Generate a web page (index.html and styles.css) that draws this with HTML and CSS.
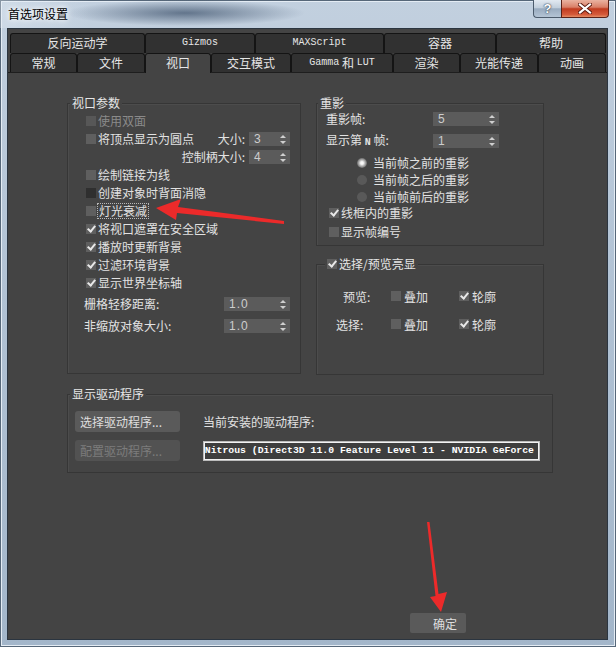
FILE: index.html
```html
<!DOCTYPE html>
<html lang="zh-CN">
<head>
  <meta charset="UTF-8">
  <title>首选项设置</title>
  <link rel="stylesheet" href="styles.css">
</head>
<body>

  <div class="window">
    <!-- Title bar -->
    <div class="titlebar">
      <span class="title">首选项设置</span>
      <div class="caption">
        <div class="cap-btn cap-help">?</div>
        <div class="cap-btn cap-close">
          <svg width="14" height="11" viewBox="0 0 14 11">
            <path d="M2 1.5 L12 9.5 M12 1.5 L2 9.5" stroke="#5a1a10" stroke-width="4" stroke-linecap="square"/>
            <path d="M2 1.5 L12 9.5 M12 1.5 L2 9.5" stroke="#ffffff" stroke-width="2.2" stroke-linecap="square"/>
          </svg>
        </div>
      </div>
    </div>

    <div class="client">
      <!-- Tabs, two rows -->
      <div class="tabs">
        <div class="tab-row row-top">
          <div class="tab tab-ik">反向运动学</div>
          <div class="tab tab-gizmos mono">Gizmos</div>
          <div class="tab tab-maxscript mono">MAXScript</div>
          <div class="tab tab-container">容器</div>
          <div class="tab tab-help">帮助</div>
        </div>
        <div class="tab-row row-bottom">
          <div class="tab tab-general">常规</div>
          <div class="tab tab-files">文件</div>
          <div class="tab tab-viewports selected">视口</div>
          <div class="tab tab-interaction">交互模式</div>
          <div class="tab tab-gamma"><span class="mono">Gamma</span>&nbsp;和&nbsp;<span class="mono">LUT</span></div>
          <div class="tab tab-render">渲染</div>
          <div class="tab tab-radiosity">光能传递</div>
          <div class="tab tab-anim">动画</div>
        </div>
      </div>

      <!-- Viewports page -->
      <div class="panel">
        <div class="columns">

          <div class="group g-view">
            <div class="group-title">视口参数</div>
            <div class="row first dim"><span class="cb"></span><span>使用双面</span></div>
            <div class="row"><span class="cb"></span><span>将顶点显示为圆点</span><span class="field-label push">大小:</span><span class="spin w-small">3</span></div>
            <div class="row end"><span class="field-label">控制柄大小:</span><span class="spin w-small">4</span></div>
            <div class="row"><span class="cb"></span><span>绘制链接为线</span></div>
            <div class="row"><span class="cb dark"></span><span>创建对象时背面消隐</span></div>
            <div class="row"><span class="cb"></span><span class="focus">灯光衰减</span></div>
            <div class="row"><span class="cb on"></span><span>将视口遮罩在安全区域</span></div>
            <div class="row"><span class="cb on"></span><span>播放时更新背景</span></div>
            <div class="row"><span class="cb on"></span><span>过滤环境背景</span></div>
            <div class="row"><span class="cb on"></span><span>显示世界坐标轴</span></div>
            <div class="row num grid-row"><span>栅格轻移距离:</span><span class="spin w-wide push">1.0</span></div>
            <div class="row num scale-row"><span>非缩放对象大小:</span><span class="spin w-wide push">1.0</span></div>
          </div>

          <div class="col-right">
            <div class="group g-ghost">
              <div class="group-title">重影</div>
              <div class="row ghost-row"><span class="lbl">重影帧:</span><span class="spin w-wide">5</span></div>
              <div class="row ghost-row second"><span class="lbl">显示第 <b class="mono">N</b> 帧:</span><span class="spin w-wide">1</span></div>
              <div class="radio-row first"><span class="rb on"></span><span>当前帧之前的重影</span></div>
              <div class="radio-row"><span class="rb"></span><span>当前帧之后的重影</span></div>
              <div class="radio-row"><span class="rb"></span><span>当前帧前后的重影</span></div>
              <div class="row cb-row wire"><span class="cb on"></span><span>线框内的重影</span></div>
              <div class="row cb-row frames"><span class="cb"></span><span>显示帧编号</span></div>
            </div>

            <div class="group g-highlight">
              <div class="group-title check-title"><span class="cb on"></span><span>选择/预览亮显</span></div>
              <div class="hl-row hl-preview">
                <span class="hl-label">预览:</span>
                <span class="hl-opt"><span class="cb"></span><span>叠加</span></span>
                <span class="hl-opt"><span class="cb on"></span><span>轮廓</span></span>
              </div>
              <div class="hl-row hl-select">
                <span class="hl-label">选择:</span>
                <span class="hl-opt"><span class="cb"></span><span>叠加</span></span>
                <span class="hl-opt"><span class="cb on"></span><span>轮廓</span></span>
              </div>
            </div>
          </div>
        </div>

        <!-- Display driver -->
        <div class="group g-driver">
          <div class="group-title">显示驱动程序</div>
          <div class="driver-row">
            <button class="btn">选择驱动程序...</button>
            <span class="driver-label">当前安装的驱动程序:</span>
          </div>
          <div class="driver-row second">
            <button class="btn" disabled>配置驱动程序...</button>
            <div class="driver-field">Nitrous (Direct3D 11.0 Feature Level 11 - NVIDIA GeForce</div>
          </div>
        </div>

        <div class="footer">
          <button class="btn btn-ok">确定</button>
        </div>
      </div>
    </div>

    <!-- Red annotation arrows drawn over the screenshot -->
    <svg class="annotations" width="616" height="647" viewBox="0 0 616 647">
      <polygon points="156,208 181,199 178,207 284,221 284,224 177,213 176,220" fill="#ec2a2a"/>
      <polygon points="427,522 429.5,522 438.5,594 447,592 441,612 430,597 435.5,596" fill="#ec2a2a"/>
    </svg>
  </div>

</body>
</html>
```

FILE: styles.css
```css
* {
  box-sizing: border-box;
}

html, body {
  margin: 0;
  padding: 0;
}

body {
  font-family: "Noto Sans CJK SC", "Noto Sans", sans-serif;
  font-size: 12px;
  background: #ffffff;
}

.mono {
  font-family: "Liberation Mono", "DejaVu Sans Mono", monospace;
  font-size: 10px;
}

/* Window frame (Windows 7 style) */
.window {
  position: relative;
  width: 616px;
  height: 647px;
  display: flex;
  flex-direction: column;
  background: linear-gradient(to bottom, #c2d0df 0%, #b1c2d4 45%, #a3b6ca 100%);
  box-shadow: inset 0 0 0 1px #566779, inset 0 0 0 2px #e4ecf4;
  overflow: hidden;
}

.titlebar {
  height: 28px;
  display: flex;
  align-items: center;
  padding: 0 7px 0 8px;
  background:
    radial-gradient(ellipse 120px 13px at 185px 13px, rgba(58, 78, 104, 0.7), rgba(58, 78, 104, 0) 100%),
    linear-gradient(to right, rgba(230, 238, 246, 0.35) 0, rgba(230, 238, 246, 0) 90px);
}

.title {
  color: #000;
  font-size: 12px;
  line-height: 14px;
  text-shadow: 0 0 5px #fff, 0 0 8px rgba(255, 255, 255, 0.9);
}

.caption {
  margin-left: auto;
  align-self: flex-start;
  display: flex;
}

.cap-btn {
  height: 18px;
  display: flex;
  align-items: center;
  justify-content: center;
  border: 1px solid #4c5b6c;
  border-top: none;
}

.cap-help {
  width: 28px;
  border-radius: 0 0 0 4px;
  border-right: none;
  background: linear-gradient(to bottom, #e2e9f1 0%, #c2cfdc 45%, #99abbf 52%, #b4c4d5 100%);
  color: #fff;
  font-family: "Liberation Sans", sans-serif;
  font-weight: bold;
  font-size: 13px;
  text-shadow: 0 0 2px #2c3a4a, 0 0 1px #2c3a4a;
}

.cap-close {
  width: 48px;
  border-radius: 0 0 4px 0;
  border-color: #5b2217;
  background: linear-gradient(to bottom, #eab3a1 0%, #d98068 42%, #c13c20 52%, #d45a3a 85%, #e58c64 100%);
}

/* Client area */
.client {
  flex: 1;
  display: flex;
  flex-direction: column;
  margin: 0 8px 7px 7px;
  border: 1px solid #2b3540;
  background: #444444;
  color: #e2e2e2;
}

.tabs {
  padding: 4px 1px 0 2px;
}

.tab-row {
  display: flex;
}

.row-top {
  height: 20px;
}

.row-bottom {
  height: 19px;
  align-items: flex-start;
}

.tab {
  height: 100%;
  display: flex;
  align-items: center;
  justify-content: center;
  border: 1px solid #141414;
  border-bottom: none;
  border-radius: 3px 3px 0 0;
  background: #313131;
  color: #e6e6e6;
  line-height: 14px;
  white-space: nowrap;
}

.row-top .tab {
  padding-bottom: 2px;
}

.row-bottom .tab {
  padding-bottom: 1px;
}

.tab.mono {
  font-weight: normal;
}

.tab.selected {
  position: relative;
  z-index: 1;
  height: 20px;
  background: #444444;
}

.tab-ik { width: 135px; }
.tab-gizmos { width: 110px; }
.tab-maxscript { width: 129px; }
.tab-container { width: 112px; }
.tab-help { width: 110px; }

.tab-general { width: 67px; }
.tab-files { width: 68px; }
.tab-viewports { width: 66px; }
.tab-interaction { width: 80px; }
.tab-gamma { width: 102px; }
.tab-render { width: 67px; }
.tab-radiosity { width: 78px; }
.tab-anim { width: 68px; }

.panel {
  flex: 1;
  display: flex;
  flex-direction: column;
  border-top: 1px solid #1e1e1e;
  padding: 0 0 6px 59px;
}

.columns {
  display: flex;
  align-items: flex-start;
  gap: 15px;
  margin-top: 30px;
}

/* Group boxes */
.group {
  border: 1px solid #363636;
  box-shadow: inset 1px 1px 0 #4c4c4c;
}

.group-title {
  display: table;
  margin: -8px 0 0 2px;
  padding: 0 2px;
  height: 14px;
  line-height: 14px;
  background: #444444;
  color: #e6e6e6;
}

.row {
  display: flex;
  align-items: center;
  height: 18px;
  line-height: 14px;
  white-space: nowrap;
}

.cb {
  position: relative;
  flex: none;
  width: 10px;
  height: 10px;
  margin-right: 2px;
  background: #5f5f5f;
}

.cb.dark {
  background: #2f2f2f;
}

.cb.on::after {
  content: "";
  position: absolute;
  left: 3px;
  top: 0;
  width: 3px;
  height: 6px;
  border: solid #e8e8e8;
  border-width: 0 2px 2px 0;
  transform: rotate(40deg);
}

.rb {
  flex: none;
  width: 10px;
  height: 10px;
  margin-right: 6px;
  border-radius: 50%;
  background: #595959;
}

.rb.on {
  background: radial-gradient(circle, #ffffff 0, #f0f0f0 1.5px, #b5b5b5 3px, #6a6a6a 5px);
}

.spin {
  position: relative;
  flex: none;
  height: 14px;
  padding-left: 5px;
  background: #5b5b5b;
  color: #cdcdcd;
  font-family: "Liberation Sans", sans-serif;
  font-size: 12px;
  line-height: 14px;
  letter-spacing: 1px;
}

.spin::before,
.spin::after {
  content: "";
  position: absolute;
  right: 4px;
  border-left: 3px solid transparent;
  border-right: 3px solid transparent;
}

.spin::before {
  top: 3px;
  border-bottom: 3px solid #cfcfcf;
}

.spin::after {
  bottom: 2px;
  border-top: 3px solid #cfcfcf;
}

.w-small { width: 41px; }
.w-wide { width: 66px; }

.push {
  margin-left: auto;
}

.field-label {
  margin-right: 4px;
}

/* Viewport parameters */
.g-view {
  width: 234px;
  padding: 0 10px 38px 18px;
}

.g-view .group-title {
  margin-left: -16px;
}

.g-view .row.first {
  margin-top: 2px;
}

.g-view .row.end {
  justify-content: flex-end;
}

.dim {
  color: #8a8a8a;
}

.dim .cb {
  background: #575757;
}

.focus {
  outline: 1px dotted #b8b8b8;
  padding: 0 1px;
  line-height: 14px;
}

.num {
  margin-left: -2px;
}

.grid-row {
  margin-top: 3px;
}

.scale-row {
  margin-top: 4px;
}

/* Right column */
.col-right {
  width: 228px;
  display: flex;
  flex-direction: column;
}

.g-ghost {
  padding: 0 0 4px 9px;
}

.g-ghost .group-title {
  margin-left: -8px;
}

.ghost-row.second {
  margin-top: 4px;
}

.lbl {
  width: 107px;
}

.lbl .mono {
  font-weight: bold;
}

.radio-row {
  display: flex;
  align-items: center;
  height: 17px;
  padding-left: 31px;
}

.radio-row.first {
  margin-top: 4px;
}

.cb-row {
  padding-left: 3px;
}

.cb-row.wire {
  margin-top: -1px;
}

.cb-row.frames {
  margin-top: 1px;
}

.g-highlight {
  margin-top: 18px;
  padding-bottom: 41px;
}

.check-title {
  display: flex;
  align-items: center;
  width: max-content;
  margin-left: 8px;
}

.hl-row {
  display: flex;
  align-items: center;
  height: 18px;
}

.hl-preview {
  margin-top: 16px;
}

.hl-select {
  margin-top: 10px;
}

.hl-label {
  width: 74px;
}

.hl-preview .hl-label {
  padding-left: 26px;
}

.hl-select .hl-label {
  padding-left: 19px;
}

.hl-opt {
  width: 68px;
  display: flex;
  align-items: center;
}

.hl-opt .cb {
  margin-right: 3px;
}

/* Display driver */
.g-driver {
  width: 486px;
  margin-top: 19px;
  padding: 0 12px 11px 7px;
}

.g-driver .group-title {
  margin-left: -5px;
}

.driver-row {
  display: flex;
  align-items: center;
  margin-top: 10px;
}

.driver-row.second {
  margin-top: 8px;
}

.btn {
  height: 21px;
  padding: 0 0 0 5px;
  border: none;
  border-radius: 3px;
  background: #5a5a5a;
  color: #dedede;
  font-family: "Noto Sans CJK SC", sans-serif;
  font-size: 12px;
  text-align: left;
}

.driver-row .btn {
  width: 105px;
}

.btn:disabled {
  background: #525252;
  color: #7c7c7c;
}

.driver-label {
  margin-left: 23px;
}

.driver-field {
  width: 338px;
  height: 20px;
  margin-left: 23px;
  padding-left: 1px;
  border: 1px solid #bcbcbc;
  box-shadow: inset 0 0 0 1px #f2f2f2;
  background: #3e3e3e;
  color: #ffffff;
  font-family: "Liberation Mono", monospace;
  font-size: 9.8px;
  font-weight: bold;
  line-height: 18px;
  white-space: nowrap;
  overflow: hidden;
}

.footer {
  margin-top: auto;
  padding-left: 343px;
}

.btn-ok {
  width: 56px;
  height: 20px;
  padding-left: 23px;
  border-radius: 2px;
}

.annotations {
  position: absolute;
  left: 0;
  top: 0;
  pointer-events: none;
}
```
